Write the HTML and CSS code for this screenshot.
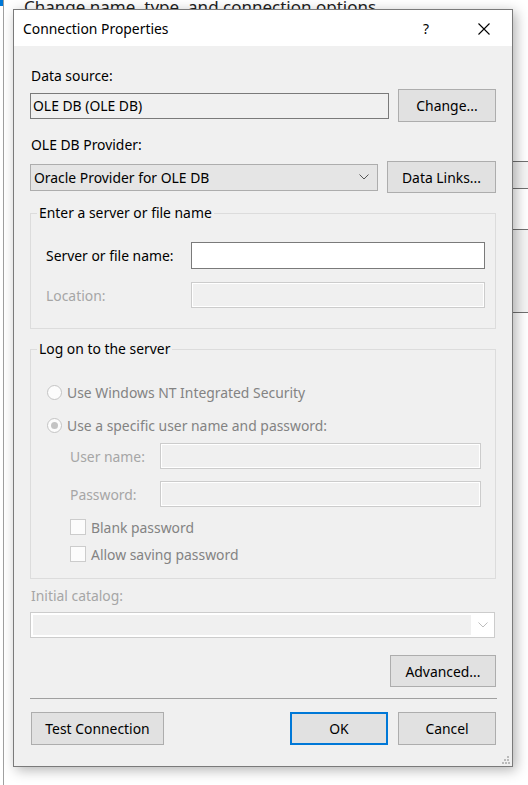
FILE: index.html
```html
<!DOCTYPE html>
<html>
<head>
<meta charset="utf-8">
<link rel="stylesheet" href="styles.css">
</head>
<body>
<div class="desk">
  <div class="bg-title">Change name, type, and connection options</div>
  <div class="bg-panel p1"></div>
  <div class="bg-panel p2"></div>
</div>
<div class="dialog">
  <div class="titlebar">
    <span class="title">Connection Properties</span>
    <span class="help">?</span>
    <svg class="close" width="12" height="12" viewBox="0 0 12 12"><path d="M0.5 0.5 L11.5 11.5 M11.5 0.5 L0.5 11.5" stroke="#000" stroke-width="1.1" fill="none"/></svg>
  </div>
  <div class="body">
    <div class="label l-ds">Data source:</div>
    <div class="row r-ds">
      <div class="textbox ro">OLE DB (OLE DB)</div>
      <div class="button b-change">Change...</div>
    </div>
    <div class="label l-prov">OLE DB Provider:</div>
    <div class="row r-prov">
      <div class="combo">
        <span>Oracle Provider for OLE DB</span>
        <svg class="chev" width="10" height="6" viewBox="0 0 10 6"><path d="M0.5 0.5 L5 5 L9.5 0.5" stroke="#555" fill="none"/></svg>
      </div>
      <div class="button b-links">Data Links...</div>
    </div>
    <fieldset class="group g1">
      <legend>Enter a server or file name</legend>
      <div class="frow f-server">
        <span class="flabel">Server or file name:</span>
        <div class="textbox edit"></div>
      </div>
      <div class="frow f-loc">
        <span class="flabel dis">Location:</span>
        <div class="textbox disbox"></div>
      </div>
    </fieldset>
    <fieldset class="group g2">
      <legend>Log on to the server</legend>
      <div class="opt o1"><span class="radio"></span><span class="otext">Use Windows NT Integrated Security</span></div>
      <div class="opt o2"><span class="radio on"></span><span class="otext">Use a specific user name and password:</span></div>
      <div class="urow u1"><span class="ulabel">User name:</span><div class="textbox disbox"></div></div>
      <div class="urow u2"><span class="ulabel">Password:</span><div class="textbox disbox"></div></div>
      <div class="chk c1"><span class="box"></span><span class="otext">Blank password</span></div>
      <div class="chk c2"><span class="box"></span><span class="otext">Allow saving password</span></div>
    </fieldset>
    <div class="label dis l-cat">Initial catalog:</div>
    <div class="combo discombo">
      <span class="drop"><svg width="10" height="6" viewBox="0 0 10 6"><path d="M0.5 0.5 L5 5 L9.5 0.5" stroke="#bdbdbd" fill="none"/></svg></span>
    </div>
    <div class="row r-adv"><div class="button b-adv">Advanced...</div></div>
    <div class="sep"></div>
    <div class="row r-bottom">
      <div class="button b-test">Test Connection</div>
      <div class="spacer"></div>
      <div class="button b-ok">OK</div>
      <div class="button b-cancel">Cancel</div>
    </div>
  </div>
  <svg class="grip" width="8" height="8" viewBox="0 0 8 8"><rect x="5" y="0" width="2" height="2" fill="#bbb"/><rect x="2" y="3" width="2" height="2" fill="#bbb"/><rect x="5" y="3" width="2" height="2" fill="#bbb"/><rect x="0" y="6" width="2" height="2" fill="#bbb"/><rect x="3" y="6" width="2" height="2" fill="#bbb"/><rect x="6" y="6" width="2" height="2" fill="#bbb"/></svg>
</div>
</body>
</html>
```
FILE: styles.css
```css
html, body { margin: 0; padding: 0; }
body {
  width: 528px; height: 785px; overflow: hidden; position: relative;
  background: #ffffff;
  font-family: "Segoe UI", "Noto Sans", sans-serif;
  font-size: 13.9px; color: #000;
}
.desk { position: absolute; inset: 0; border-left: 1px solid #a0a0a0; margin-left: 3px; }
.desk::before { content: ""; position: absolute; left: -4px; top: 0; width: 3px; height: 6px; background: #0078d7; }
.bg-title { position: absolute; left: 20px; top: -5px; font-size: 17px; color: #222; white-space: nowrap; }
.bg-panel { position: absolute; left: 490px; width: 60px; border-top: 1px solid #707070; border-bottom: 1px solid #707070; background: #f4f4f4; }
.p1 { top: 161px; height: 26px; }
.p2 { top: 229px; height: 82px; }

.dialog {
  position: absolute; left: 13px; top: 9px; width: 498px; height: 756px;
  border: 1px solid #7a7a7a; background: #f0f0f0;
  box-shadow: 3px 3px 12px rgba(0,0,0,0.30);
}
.titlebar { height: 36px; background: #fff; display: flex; align-items: center; position: relative; }
.title { margin-left: 9px; }
.help { position: absolute; left: 409px; top: 9px; }
.close { position: absolute; left: 464px; top: 13px; }

.body { padding: 0 16px 0 16px; display: flex; flex-direction: column; }
.label { height: 20px; line-height: 20px; padding-left: 1px; }
.dis { color: #a6a6a6; }
.l-ds { margin-top: 20px; }
.row { display: flex; align-items: center; }
.r-ds { margin-top: 3px; height: 33px; gap: 9px; }
.textbox { box-sizing: border-box; height: 26px; border: 1px solid #7a7a7a; background: #fff; line-height: 24px; padding-left: 2px; }
.textbox.ro { width: 359px; background: #f0f0f0; }
.button { box-sizing: border-box; background: #e1e1e1; border: 1px solid #adadad; display: flex; align-items: center; justify-content: center; }
.b-change { width: 98px; height: 33px; }
.l-prov { margin-top: 13px; }
.r-prov { margin-top: 6px; height: 32px; gap: 9px; }
.combo { box-sizing: border-box; width: 348px; height: 27px; background: #e5e5e5; border: 1px solid #adadad; display: flex; align-items: center; justify-content: space-between; padding: 0 8px 0 3px; }
.chev { display: block; }
.b-links { width: 109px; height: 32px; }

.group { margin: 0; padding: 0; border: 1px solid #dcdcdc; min-width: 0; }
.group legend { padding: 0 2px; margin-left: 6px; height: 20px; line-height: 20px; }
.g1 { margin-top: 10px; padding-bottom: 20px; }
.frow { display: flex; align-items: center; padding-left: 15px; padding-right: 10px; }
.flabel { flex: 1; }
.f-server { margin-top: 19px; height: 27px; }
.f-server .textbox { width: 294px; height: 27px; }
.f-loc { margin-top: 13px; height: 26px; }
.f-loc .textbox { width: 294px; }
.disbox { background: #f0f0f0; border-color: #cccccc; box-shadow: inset 0 0 0 1px #fff; }

.g2 { margin-top: 10px; padding-bottom: 14px; }
.otext { color: #838383; }
.opt { display: flex; align-items: center; height: 20px; padding-left: 16px; }
.o1 { margin-top: 23px; }
.o2 { margin-top: 13px; }
.radio { box-sizing: border-box; width: 15px; height: 15px; border: 1px solid #c4c4c4; border-radius: 50%; background: #fcfcfc; margin-right: 5px; position: relative; }
.radio.on::after { content: ""; position: absolute; left: 3px; top: 3px; width: 7px; height: 7px; border-radius: 50%; background: #c4c4c4; }
.urow { display: flex; align-items: center; height: 26px; padding-left: 39px; padding-right: 14px; }
.ulabel { flex: 1; color: #a6a6a6; }
.urow .textbox { width: 321px; }
.u1 { margin-top: 8px; }
.u2 { margin-top: 12px; }
.chk { display: flex; align-items: center; height: 20px; padding-left: 39px; }
.box { box-sizing: border-box; width: 16px; height: 16px; border: 1px solid #cccccc; background: #fcfcfc; margin-right: 5px; }
.c1 { margin-top: 10px; }
.c2 { margin-top: 7px; }

.l-cat { margin-top: 7px; }
.discombo { margin-top: 6px; width: 465px; height: 26px; background: #f0f0f0; border-color: #cccccc; box-shadow: inset 0 0 0 2px #fff; padding: 0; justify-content: flex-end; }
.drop { width: 23px; height: 24px; background: #fff; display: flex; align-items: center; justify-content: center; }
.r-adv { margin-top: 17px; justify-content: flex-end; }
.b-adv { width: 106px; height: 32px; }
.sep { margin-top: 11px; height: 1px; background: #a0a0a0; width: 467px; }
.r-bottom { margin-top: 13px; height: 33px; }
.b-test { width: 133px; height: 33px; margin-left: 1px; }
.spacer { flex: 1; }
.b-ok { width: 98px; height: 33px; border: 2px solid #0078d7; margin-right: 10px; }
.b-cancel { width: 98px; height: 33px; }
.grip { position: absolute; right: 2px; bottom: 2px; }
```
